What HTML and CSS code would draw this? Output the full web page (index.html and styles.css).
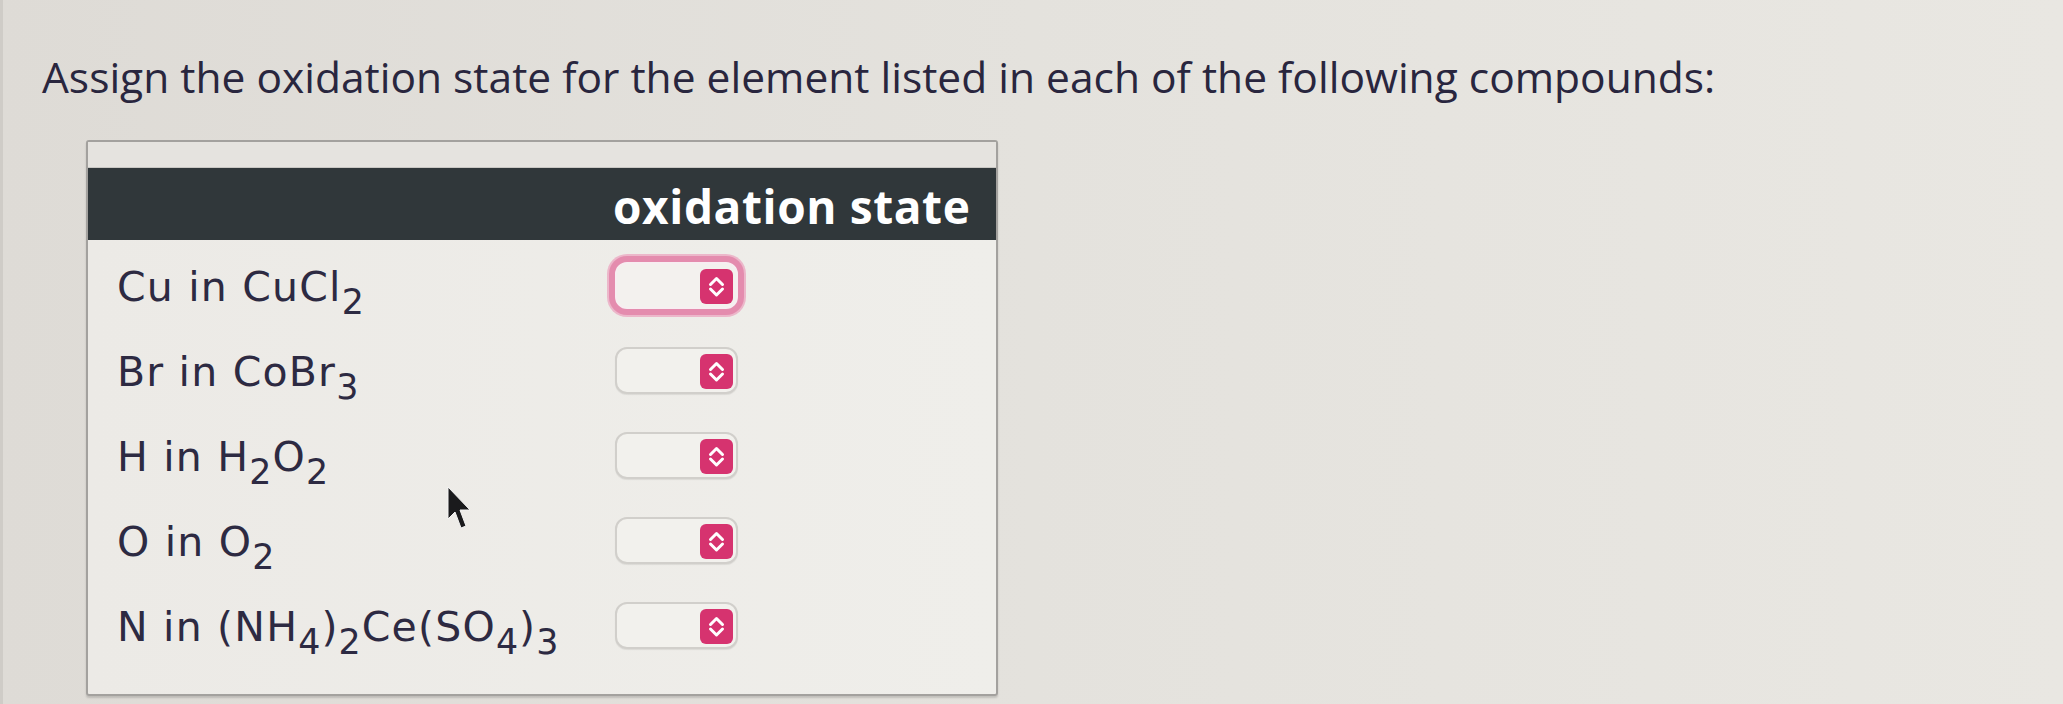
FILE: index.html
```html
<!DOCTYPE html>
<html lang="en">
<head>
  <meta charset="UTF-8" />
  <title>Oxidation states</title>
  <link rel="stylesheet" href="styles.css">
</head>
<body>
  <div class="page">
    <p class="prompt">Assign the oxidation state for the element listed in each of the following compounds:</p>

    <div class="panel">
      <div class="panel-top"></div>
      <div class="head">
        <div></div>
        <div class="head-cell">oxidation state</div>
      </div>

      <div class="rows">
        <div class="row">
          <div class="label">Cu in CuCl<sub>2</sub></div>
          <div class="select focus">
            <span class="spin"><svg viewBox="0 0 33 35"><path d="M10.5 15.5 L16.5 9.5 L22.5 15.5 M10.5 20 L16.5 26 L22.5 20" /></svg></span>
          </div>
        </div>
        <div class="row">
          <div class="label">Br in CoBr<sub>3</sub></div>
          <div class="select">
            <span class="spin"><svg viewBox="0 0 33 35"><path d="M10.5 15.5 L16.5 9.5 L22.5 15.5 M10.5 20 L16.5 26 L22.5 20" /></svg></span>
          </div>
        </div>
        <div class="row">
          <div class="label">H in H<sub>2</sub>O<sub>2</sub></div>
          <div class="select">
            <span class="spin"><svg viewBox="0 0 33 35"><path d="M10.5 15.5 L16.5 9.5 L22.5 15.5 M10.5 20 L16.5 26 L22.5 20" /></svg></span>
          </div>
        </div>
        <div class="row">
          <div class="label">O in O<sub>2</sub></div>
          <div class="select">
            <span class="spin"><svg viewBox="0 0 33 35"><path d="M10.5 15.5 L16.5 9.5 L22.5 15.5 M10.5 20 L16.5 26 L22.5 20" /></svg></span>
          </div>
        </div>
        <div class="row">
          <div class="label">N in (NH<sub>4</sub>)<sub>2</sub>Ce(SO<sub>4</sub>)<sub>3</sub></div>
          <div class="select">
            <span class="spin"><svg viewBox="0 0 33 35"><path d="M10.5 15.5 L16.5 9.5 L22.5 15.5 M10.5 20 L16.5 26 L22.5 20" /></svg></span>
          </div>
        </div>
      </div>
    </div>

    <!-- mouse pointer sitting over the table -->
    <svg class="cursor" viewBox="0 0 24 44">
      <path d="M1 1 L1 33 L8 26 L14 42 L19 40 L13 24 L23 24 Z" />
    </svg>
  </div>
</body>
</html>
```

FILE: styles.css
```css
* {
  margin: 0;
  padding: 0;
  box-sizing: border-box;
}

body {
  width: 2063px;
  height: 704px;
  overflow: hidden;
  background: linear-gradient(to right, #dedbd6, #e4e2dd 50%, #e9e7e2);
}

.page {
  position: relative;
  height: 100%;
  padding: 50px 0 0 42px;
  border-left: 3px solid #cfccc7;
}

.prompt {
  font-family: "Open Sans", sans-serif;
  font-size: 42.5px;
  line-height: 54px;
  color: #29263e;
  margin-left: -3px;
}

.panel {
  width: 912px;
  height: 556px;
  margin: 36px 0 0 41px;
  border: 2px solid #a3a19e;
  border-radius: 3px;
  background: linear-gradient(to right, #eceae6, #efeeea);
  box-shadow: 0 2px 2px rgba(0, 0, 0, 0.15);
}

.panel-top {
  height: 26px;
  background: #e5e3df;
  border-bottom: 1px solid #c9c7c3;
}

.head {
  display: grid;
  grid-template-columns: 525px 1fr;
  height: 72px;
  background: #30373a;
}

.head-cell {
  font-family: "Open Sans", sans-serif;
  font-weight: 700;
  font-size: 46px;
  letter-spacing: 0.6px;
  line-height: 72px;
  padding-top: 2px;
  color: #ffffff;
}

.rows {
  padding-top: 3px;
}

.row {
  display: grid;
  grid-template-columns: 527px 1fr;
  align-items: center;
  height: 85px;
}

.label {
  font-family: "DejaVu Sans", Verdana, sans-serif;
  font-size: 41px;
  letter-spacing: 1.2px;
  line-height: 40px;
  padding: 2px 0 0 29px;
  color: #2d2a42;
}

.label sub {
  font-size: 0.85em;
  line-height: 0;
  vertical-align: -0.38em;
  letter-spacing: 1px;
}

.select {
  position: relative;
  width: 123px;
  height: 47px;
  border: 2px solid #d1cfcb;
  border-radius: 12px;
  background: #f2f1ed;
  box-shadow: 0 1px 1px rgba(0, 0, 0, 0.08);
}

.select.focus {
  border-color: #f7eef1;
  background: #f3f1ee;
  box-shadow: 0 0 0 6px #e48cae, 0 0 0 8px #ecb7ca;
}

.spin {
  position: absolute;
  top: 5px;
  right: 3px;
  width: 33px;
  height: 35px;
  border-radius: 6px;
  background: #d6336f;
}

.spin svg {
  display: block;
  width: 33px;
  height: 35px;
  fill: none;
  stroke: #ffffff;
  stroke-width: 3;
  stroke-linecap: round;
  stroke-linejoin: round;
}

.cursor {
  position: absolute;
  left: 444px;
  top: 486px;
  width: 24px;
  height: 44px;
}

.cursor path {
  fill: #1a1a1c;
  stroke: #f4f4f4;
  stroke-width: 1;
}
```
